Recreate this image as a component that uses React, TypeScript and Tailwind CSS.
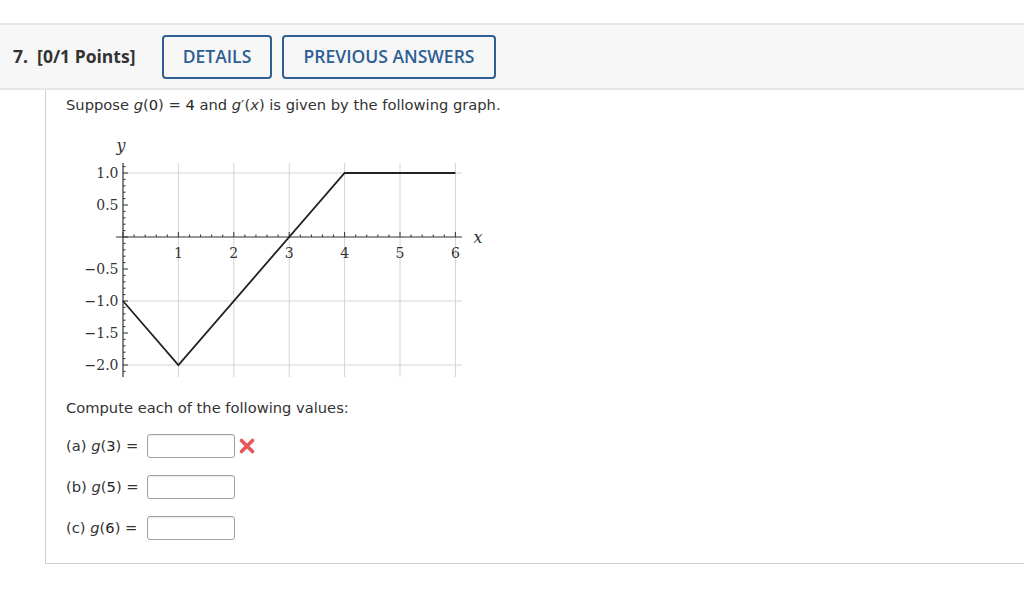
import React from "react";

const X = (x: number) => 123 + 55.4 * x;
const Y = (y: number) => 237 - 64 * y;

function Graph() {
  const minorY: number[] = [];
  for (let i = -21; i <= 11; i++) minorY.push(i / 10);
  const minorX: number[] = [];
  for (let i = 0; i <= 30; i++) minorX.push(i / 5);
  const serif = "'DejaVu Serif', 'Liberation Serif', serif";
  return (
    <svg width={440} height={260} viewBox="66 130 440 260" className="block">
      {[1, 2, 3, 4, 5, 6].map((v) => (
        <line key={"gv" + v} x1={X(v)} y1={163} x2={X(v)} y2={377} stroke="#d4d4d4" strokeWidth={1} />
      ))}
      {[1, -1, -2].map((v) => (
        <line key={"gh" + v} x1={X(0)} y1={Y(v)} x2={462} y2={Y(v)} stroke="#d4d4d4" strokeWidth={1} />
      ))}
      <line x1={123} y1={163} x2={123} y2={377} stroke="#333" strokeWidth={1.2} />
      <line x1={116} y1={237} x2={462} y2={237} stroke="#333" strokeWidth={1.2} />
      {minorY.map((v, i) => {
        const major = Math.round(v * 10) % 5 === 0;
        return (
          <line key={"ty" + i} x1={123} y1={Y(v)} x2={major ? 128 : 125.5} y2={Y(v)} stroke="#333" strokeWidth={1} />
        );
      })}
      {minorX.map((v, i) => {
        const major = i % 5 === 0;
        return (
          <line key={"tx" + i} x1={X(v)} y1={237} x2={X(v)} y2={major ? 232 : 234.5} stroke="#333" strokeWidth={1} />
        );
      })}
      {[
        [1, "1.0"],
        [0.5, "0.5"],
        [-0.5, "\u22120.5"],
        [-1, "\u22121.0"],
        [-1.5, "\u22121.5"],
        [-2, "\u22122.0"],
      ].map(([v, t]) => (
        <text key={"ly" + t} x={118.5} y={Y(v as number) + 5} textAnchor="end" fontFamily={serif} fontSize={14} fill="#333">
          {t as string}
        </text>
      ))}
      {[1, 2, 3, 4, 5, 6].map((v) => (
        <text key={"lx" + v} x={X(v)} y={258} textAnchor="middle" fontFamily={serif} fontSize={14} fill="#333">
          {v}
        </text>
      ))}
      <text x={121} y={151} textAnchor="middle" fontFamily={serif} fontStyle="italic" fontSize={16} fill="#333">
        y
      </text>
      <text x={478} y={243} textAnchor="middle" fontFamily={serif} fontStyle="italic" fontSize={16} fill="#333">
        x
      </text>
      <polyline
        points={`${X(0)},${Y(-1)} ${X(1)},${Y(-2)} ${X(4)},${Y(1)} ${X(6)},${Y(1)}`}
        fill="none"
        stroke="#222"
        strokeWidth={1.8}
        strokeLinejoin="miter"
      />
    </svg>
  );
}

function G({ children }: { children: React.ReactNode }) {
  return <i className="italic">{children}</i>;
}

function Row({ label, n, wrong, mt }: { label: string; n: string; wrong?: boolean; mt: string }) {
  return (
    <div className={`flex items-center ${mt}`}>
      <span className="w-[81px] whitespace-nowrap">
        ({label}) <G>g</G>(<span className="text-[#222]">{n}</span>) =
      </span>
      <div className="w-[88px] h-[24px] border border-[#a0a0a0] rounded-[3px] bg-white shadow-[inset_0_1px_1px_rgba(0,0,0,0.08)]" />
      {wrong && (
        <svg width={20} height={20} viewBox="0 0 20 20" className="ml-[2px]">
          <path d="M4.5 4.5 L15.5 15.5 M15.5 4.5 L4.5 15.5" stroke="#e5575a" strokeWidth={3.6} strokeLinecap="round" />
        </svg>
      )}
    </div>
  );
}

export default function App() {
  return (
    <div className="w-[1024px] h-[606px] bg-white text-[#333] pt-[23px]">
      <div className="h-[67px] bg-[#f7f7f7] border-t-2 border-b-2 border-[#e6e6e6] flex items-center">
        <div
          className="ml-[13px] w-[149px] text-[17.5px] font-bold text-[#333] whitespace-pre"
          style={{ fontFamily: "'Open Sans', sans-serif" }}
        >
          7.  [0/1 Points]
        </div>
        <div
          className="h-[44px] w-[110px] border-2 border-[#2f5f93] rounded-[4px] flex items-center justify-center text-[17.5px] font-semibold text-[#2d5e94]"
          style={{ fontFamily: "'Open Sans', sans-serif" }}
        >
          DETAILS
        </div>
        <div
          className="ml-[10px] h-[44px] w-[214px] border-2 border-[#2f5f93] rounded-[4px] flex items-center justify-center text-[17.5px] font-semibold text-[#2d5e94]"
          style={{ fontFamily: "'Open Sans', sans-serif" }}
        >
          PREVIOUS ANSWERS
        </div>
      </div>
      <div
        className="ml-[45px] border-l border-b border-[#d0d0d0] h-[474px] pl-[20px] pt-[5px] text-[14.7px] leading-[20px] text-[#333]"
        style={{ fontFamily: "Verdana, 'DejaVu Sans', sans-serif" }}
      >
        <div>
          Suppose <G>g</G>(<span className="text-[#222]">0</span>) = <span className="text-[#222]">4</span> and <G>g</G>′(<G>x</G>) is
          given by the following graph.
        </div>
        <div className="mt-[15px]">
          <Graph />
        </div>
        <div className="mt-[8px]">Compute each of the following values:</div>
        <Row label="a" n="3" wrong mt="mt-[16px]" />
        <Row label="b" n="5" mt="mt-[17px]" />
        <Row label="c" n="6" mt="mt-[17px]" />
      </div>
    </div>
  );
}
